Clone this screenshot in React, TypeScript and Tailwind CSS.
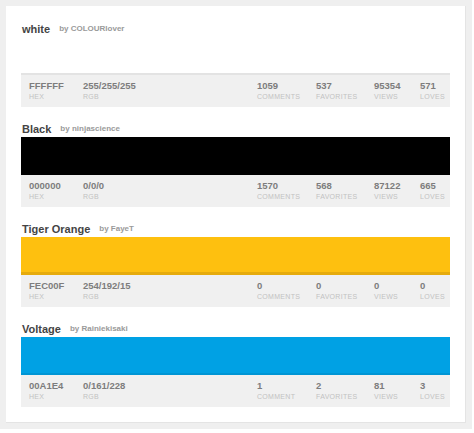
type Palette = {
  name: string
  by: string
  hex: string
  rgb: string
  swatch: string
  stats: [string, string][]
}

const PALETTES: Palette[] = [
  {
    name: 'white', by: 'COLOURlover', hex: 'FFFFFF', rgb: '255/255/255',
    swatch: 'bg-white border-b-2 border-[#e3e3e3]',
    stats: [['1059', 'Comments'], ['537', 'Favorites'], ['95354', 'Views'], ['571', 'Loves']],
  },
  {
    name: 'Black', by: 'ninjascience', hex: '000000', rgb: '0/0/0',
    swatch: 'bg-black',
    stats: [['1570', 'Comments'], ['568', 'Favorites'], ['87122', 'Views'], ['665', 'Loves']],
  },
  {
    name: 'Tiger Orange', by: 'FayeT', hex: 'FEC00F', rgb: '254/192/15',
    swatch: 'bg-[#fec00f] border-b-[3px] border-[#e6ab0c]',
    stats: [['0', 'Comments'], ['0', 'Favorites'], ['0', 'Views'], ['0', 'Loves']],
  },
  {
    name: 'Voltage', by: 'Rainiekisaki', hex: '00A1E4', rgb: '0/161/228',
    swatch: 'bg-[#00a1e4] border-b-2 border-[#0095d4]',
    stats: [['1', 'Comment'], ['2', 'Favorites'], ['81', 'Views'], ['3', 'Loves']],
  },
]

// left offsets of the four stat columns, relative to the bar
const STAT_X = ['left-[236px]', 'left-[295px]', 'left-[353px]', 'left-[399px]']

function Cell({ value, label, className = '' }: { value: string; label: string; className?: string }) {
  return (
    <div className={`absolute top-[5px] flex flex-col ${className}`}>
      <span className="text-[9.5px] leading-[12px] font-bold text-[#7d7d7d]">{value}</span>
      <span className="text-[7px] leading-[10px] uppercase tracking-[0.3px] text-[#c2c2c2]">{label}</span>
    </div>
  )
}

export default function App() {
  return (
    <div className="w-[472px] h-[429px] bg-[#efefef] p-[6px]" style={{ fontFamily: '"Liberation Sans", Arial, sans-serif' }}>
      <div className="h-full bg-white border-r border-b border-[#e4e4e4] px-[15px] pt-[15px] flex flex-col gap-[14px]">
        {PALETTES.map(p => (
          <div key={p.hex} className="flex flex-col">
            <div className="h-[16px] flex items-center gap-[9px] pl-[1px]">
              <span className="text-[11px] font-bold text-[#444]">{p.name}</span>
              <span className="text-[8px] font-bold text-[#9a9a9a]">by {p.by}</span>
            </div>
            <div className={`h-[38px] ${p.swatch}`} />

            {/* info bar */}
            <div className="relative h-[32px] bg-[#f0f0f0]">
              <Cell value={p.hex} label="Hex" className="left-[8px]" />
              <Cell value={p.rgb} label="RGB" className="left-[62px]" />
              {p.stats.map(([v, l], i) => (
                <Cell key={l} value={v} label={l} className={STAT_X[i]} />
              ))}
            </div>
          </div>
        ))}
      </div>
    </div>
  )
}
